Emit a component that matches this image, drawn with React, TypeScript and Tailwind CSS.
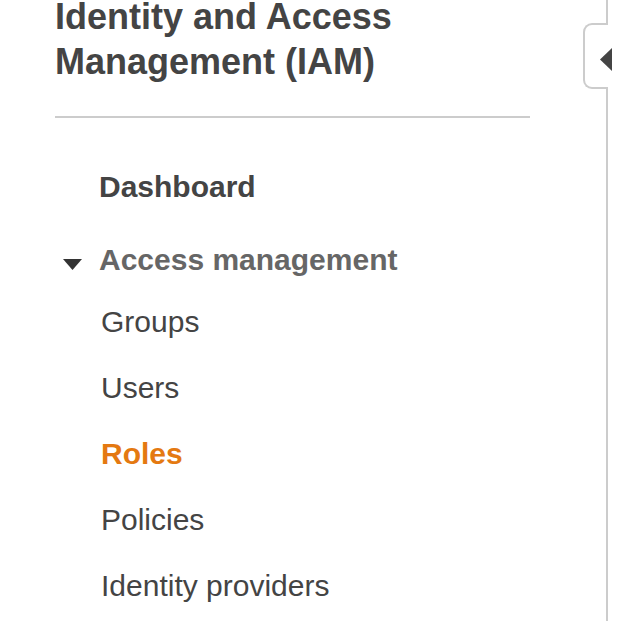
export default function App() {
  const items = [
    { label: "Groups", active: false },
    { label: "Users", active: false },
    { label: "Roles", active: true },
    { label: "Policies", active: false },
    { label: "Identity providers", active: false },
  ];

  return (
    <div className="relative w-[635px] h-[621px] overflow-hidden bg-white font-['Liberation_Sans',Arial,sans-serif]">
      {/* Side nav */}
      <div className="flex w-[607px] h-full">
        <nav className="w-[530px] pl-[55px]">
          <h1 className="-mt-[6px] text-[36px] leading-[45px] font-bold text-[#444]">
            Identity and Access Management (IAM)
          </h1>
          <div className="mt-[32px] h-[2px] bg-[#ccc]" />

          <a className="block mt-[52px] pl-[44px] text-[30px] leading-[34px] font-bold text-[#444]">
            Dashboard
          </a>

          <div className="mt-[39px] flex items-start">
            <svg width="19" height="11" viewBox="0 0 19 11" className="mt-[16px] ml-[8px] mr-[17px]">
              <polygon points="0,0 19,0 9.5,11" fill="#333" />
            </svg>
            <span className="text-[30px] leading-[34px] font-bold text-[#666]">Access management</span>
          </div>

          <ul className="mt-[28px] pl-[46px] flex flex-col gap-[32px]">
            {items.map((it) => (
              <li
                key={it.label}
                className={
                  it.active
                    ? "text-[30px] leading-[34px] font-bold text-[#e47911]"
                    : "text-[30px] leading-[34px] text-[#444]"
                }
              >
                {it.label}
              </li>
            ))}
          </ul>
        </nav>
      </div>

      {/* Divider with collapse tab */}
      <div className="absolute top-0 left-[606px] w-[2px] h-full bg-[#ccc]" />
      <div className="absolute top-[23px] left-[583px] w-[25px] h-[66px] bg-white border-2 border-r-0 border-[#ccc] rounded-l-[9px]" />
      <svg className="absolute top-[48px] left-[600px]" width="12" height="23" viewBox="0 0 12 23">
        <polygon points="12,0 12,23 0,11.5" fill="#444" />
      </svg>
    </div>
  );
}
